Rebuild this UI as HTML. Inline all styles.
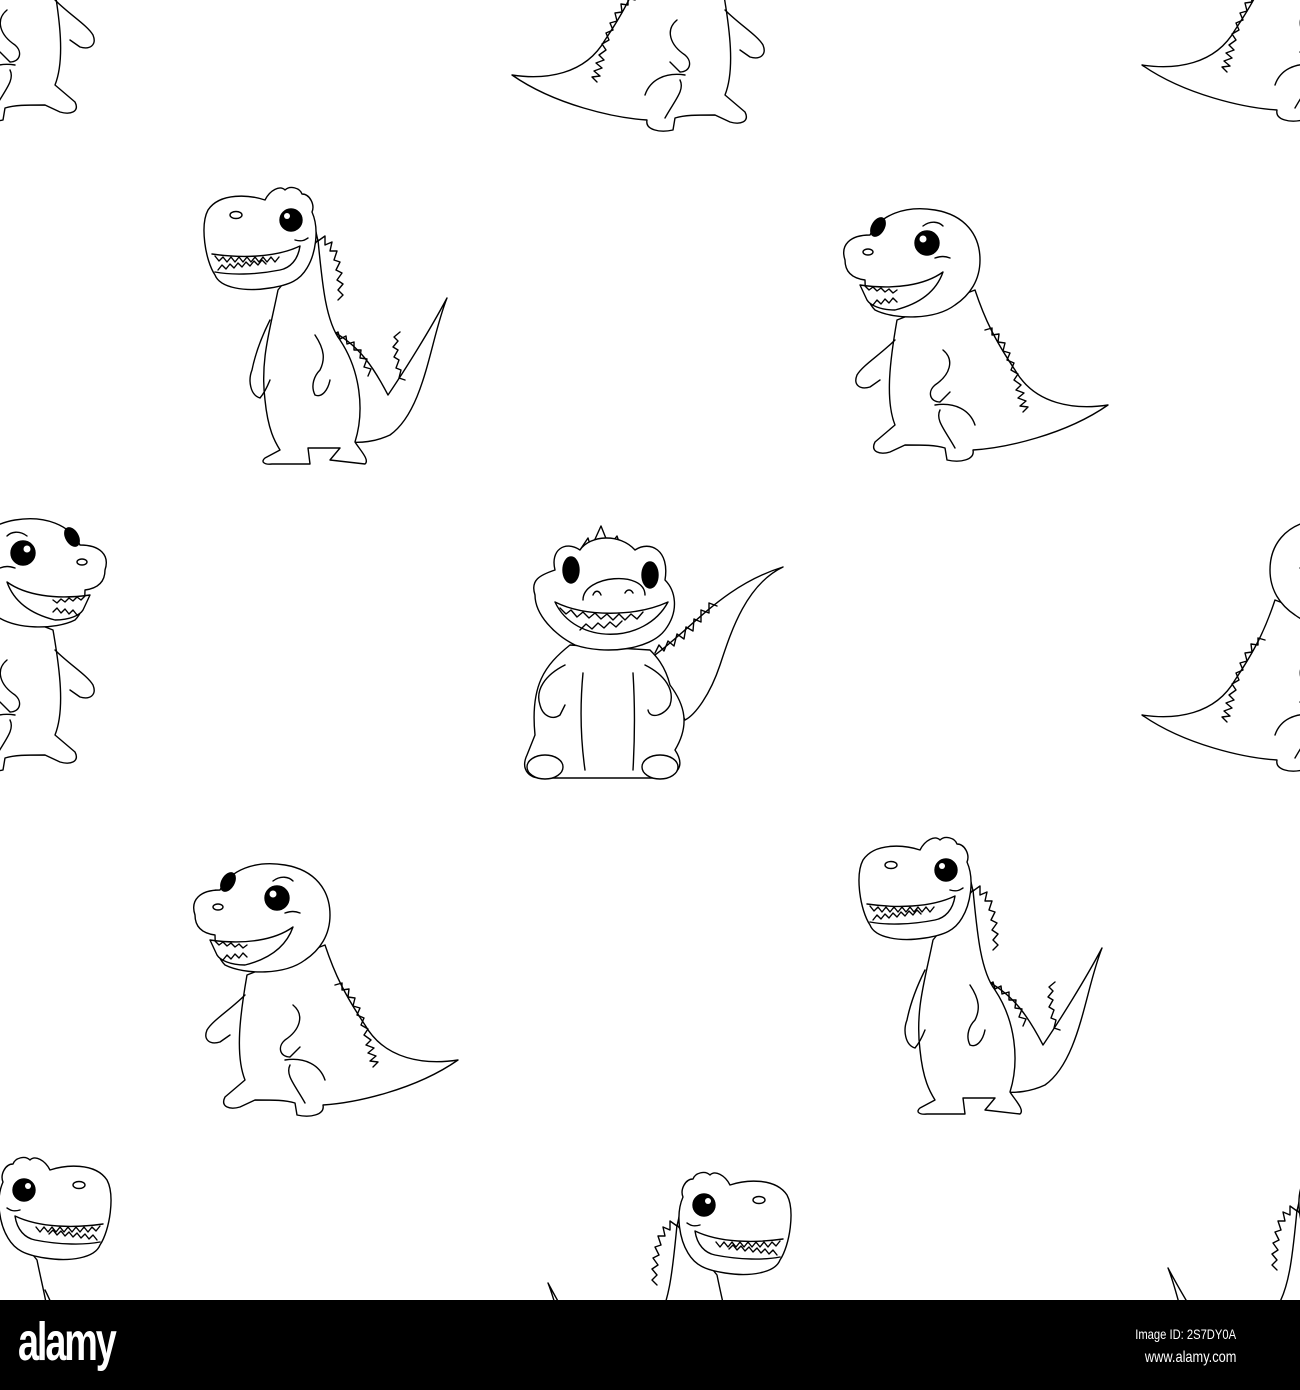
<!DOCTYPE html>
<html><head><meta charset="utf-8"><style>
html,body{margin:0;padding:0;background:#fff}
body{width:1300px;height:1390px;position:relative;overflow:hidden;font-family:"Liberation Sans",sans-serif}
svg.main{position:absolute;left:0;top:0}
.f{position:absolute;left:0;top:1300px;width:1300px;height:90px;background:#000}
.logo{position:absolute;left:18px;top:14px;color:#fff;font-weight:bold;font-size:54px;letter-spacing:-3px;transform:scaleX(0.7);transform-origin:left;line-height:56px}
.r{position:absolute;right:64px;color:#fff;font-size:14px;transform:scaleX(0.8);transform-origin:right}
</style></head><body>
<svg class="main" width="1300" height="1300" viewBox="0 0 1300 1300">
<defs>
<g id="trex" fill="#fff" stroke="#000" stroke-width="1.4" stroke-linejoin="round" stroke-linecap="round">
 <path d="M140,150 C170,165 185,190 198,215 C215,190 240,150 257,118 C240,160 235,230 200,255 C185,262 170,263 160,262 Z"/>
 <path d="M142,155 l6,-3 2,7 6,-3 1,8 7,-2 0,8 7,0 -1,8 7,1 -3,8 7,2 -3,7 M215,200 l-6,-2 2,-8 -5,-2 3,-8 -5,-3 4,-7 -5,-3 5,-6 -4,-4 6,-5" fill="none"/>
 <path d="M88,110 C80,150 70,180 75,220 C78,250 85,262 90,270 L75,278 C70,282 75,285 82,284 L120,284 L118,268 C130,268 140,268 150,268 L140,280 L175,284 C180,280 170,270 165,262 C175,230 170,190 150,160 C135,140 132,100 128,60 Z"/>
 <path d="M80,140 C70,160 65,175 62,190 C58,200 60,215 70,218 C75,212 78,205 80,200 M125,155 C135,170 135,180 130,190 C125,195 120,205 125,215 C132,218 138,210 140,200" fill="none"/>
 <path d="M120,60 l6,-8 2,9 7,-5 0,9 7,-3 -2,9 7,0 -3,9 6,2 -4,8 6,3 -5,7 6,4 -5,6 5,5 -5,5" fill="none"/>
 <path d="M25,95 C15,80 10,45 18,30 C30,12 60,15 75,20 C80,10 90,5 95,10 C100,5 110,8 112,14 C120,14 125,25 122,32 C130,50 125,75 117,88 C110,100 100,105 80,108 C55,112 30,108 25,95 Z"/>
 <circle cx="101" cy="40" r="11" fill="#000"/><circle cx="97" cy="36" r="3" fill="#fff" stroke="none"/>
 <ellipse cx="46" cy="35" rx="6" ry="3.5" fill="none"/>
 <path d="M22,74 C50,78 85,78 110,66 C108,80 100,88 90,90 C65,95 40,95 25,92" fill="#fff"/>
 <path d="M25,76 l4,5 4,-4 4,5 4,-5 4,5 4,-5 4,5 4,-5 4,5 4,-5 4,5 4,-5 4,5 4,-5 4,5 4,-5 M28,90 l4,-5 4,4 4,-5 4,4 4,-5 4,4 4,-5 4,4 4,-5 4,4 4,-5 4,4" fill="none"/>
 <path d="M105,60 C112,62 115,60 118,58" fill="none"/>
</g>
<g id="chub" fill="#fff" stroke="#000" stroke-width="1.4" stroke-linejoin="round" stroke-linecap="round">
 <path d="M62,140 C55,180 50,220 60,245 L40,262 C35,272 45,275 55,272 L70,265 C90,265 100,265 110,268 L112,280 C125,283 140,280 138,270 C170,268 230,255 273,225 C240,230 200,225 180,190 C160,160 150,140 140,110 Z"/>
 <path d="M150,150 l7,-2 0,7 7,-1 -1,8 7,1 -2,8 7,2 -3,7 7,3 -3,7 7,4 -4,6 7,5 -5,5 8,3 -6,5 8,3 -6,5 8,1 -5,5" fill="none"/>
 <path d="M60,160 C45,175 28,185 22,195 C18,205 25,210 35,207 L45,200 M108,170 C120,180 115,195 100,205 C92,212 95,222 105,222 L115,212 M100,225 C120,222 135,230 140,245 M120,268 C110,250 100,240 105,230" fill="none"/>
 <path d="M40,55 l10,-14 4,12 8,-12 6,12 10,-14 4,14 10,-10 3,12 10,-6 0,12 10,-4 -3,12 9,0 -4,10 8,2 -5,9 7,4 -6,8 6,5 -7,5" fill="none"/>
 <path d="M10,80 C5,65 15,55 35,55 C45,35 70,25 100,30 C130,35 145,55 145,80 C145,100 135,115 120,125 C100,140 60,140 40,130 C30,120 30,105 30,100 C15,98 10,90 10,80 Z"/>
 <circle cx="92" cy="63" r="12" fill="#000"/><circle cx="88" cy="59" r="3.5" fill="#fff" stroke="none"/>
 <ellipse cx="43" cy="47" rx="6" ry="10" fill="#000" transform="rotate(30 43 47)"/>
 <ellipse cx="33" cy="72" rx="5" ry="3" fill="none"/>
 <path d="M25,105 C60,110 90,105 108,92 C100,115 80,125 60,130 C45,130 35,125 32,120 Z" fill="#fff"/>
 <path d="M30,106 l4,4 4,-3 4,4 4,-3 4,4 4,-3 4,4 4,-3 M38,125 l4,-5 4,4 4,-5 4,4 4,-5 4,4" fill="none"/>
 <path d="M88,46 C96,40 104,42 108,46 M100,78 C106,76 110,76 115,78" fill="none"/>
</g>
<g id="sit" fill="#fff" stroke="#000" stroke-width="1.4" stroke-linejoin="round" stroke-linecap="round">
 <path d="M150,150 C190,120 220,80 278,62 C240,80 225,130 215,160 C205,190 190,210 180,215 Z"/>
 <path d="M150,148 l4,-8 5,6 4,-10 6,5 3,-12 7,5 2,-12 7,4 1,-12 7,3 0,-12 8,3 0,-10 8,3" fill="none"/>
 <path d="M65,140 C40,160 25,180 30,230 L22,250 C15,265 25,275 40,273 L150,273 C175,272 180,260 170,245 C185,220 180,200 165,180 C160,160 150,150 145,145 Z"/>
 <path d="M60,160 C40,170 30,185 35,200 C38,212 48,215 55,210 L60,200 M140,160 C160,170 170,185 165,200 C160,210 145,215 143,205 M78,168 C75,200 75,230 80,265 M128,168 C130,200 130,230 128,265" fill="none"/>
 <ellipse cx="40" cy="262" rx="18" ry="12"/><ellipse cx="155" cy="262" rx="18" ry="12"/>
 <path d="M75,45 l8,-12 3,10 10,-22 8,20 8,-10 4,12" fill="none"/>
 <path d="M30,90 C25,75 35,70 50,65 C45,45 60,35 75,45 C85,30 115,28 130,45 C145,35 165,45 160,75 C170,85 175,105 160,125 C145,145 100,150 70,140 C50,130 30,110 30,90 Z"/>
 <ellipse cx="66" cy="65" rx="8" ry="13" fill="#000"/><ellipse cx="145" cy="70" rx="8" ry="13" fill="#000"/>
 <path d="M78,95 C78,70 140,65 140,90 M88,90 C90,85 94,85 96,90 M120,88 C122,84 126,84 128,88" fill="none"/>
 <path d="M50,97 C70,140 140,140 163,97 C130,112 80,112 50,97 Z"/>
 <path d="M55,103 l6,6 5,-4 6,7 6,-5 6,6 6,-5 6,6 6,-5 6,6 6,-6 6,6 6,-6 6,5 6,-7 M75,125 l6,-6 6,5 6,-6 6,5 6,-6 6,5 6,-6" fill="none"/>
</g>
</defs>
<use href="#trex" transform="translate(190,180)"/>
<use href="#chub" transform="translate(835,180)"/>
<use href="#sit" transform="translate(505,505)"/>
<use href="#chub" transform="translate(185,835)"/>
<use href="#trex" transform="translate(845,830)"/>
<!-- partials -->
<use href="#chub" transform="translate(785,-150) scale(-1,1)"/>
<use href="#chub" transform="translate(115,-160) scale(-1,1)"/>
<use href="#chub" transform="translate(1415,-160) scale(-1,1)"/>
<use href="#chub" transform="translate(115,490) scale(-1,1)"/>
<use href="#chub" transform="translate(1415,490) scale(-1,1)"/>
<use href="#trex" transform="translate(125,1150) scale(-1,1)"/>
<use href="#trex" transform="translate(805,1165) scale(-1,1)"/>
<use href="#trex" transform="translate(1425,1150) scale(-1,1)"/>
</svg>
<div class="f">
 <div class="logo">alamy</div>
 <div class="r" style="top:26px">Image ID: 2S7DY0A</div>
 <div class="r" style="top:49px;font-size:16px">www.alamy.com</div>
</div>
</body></html>
